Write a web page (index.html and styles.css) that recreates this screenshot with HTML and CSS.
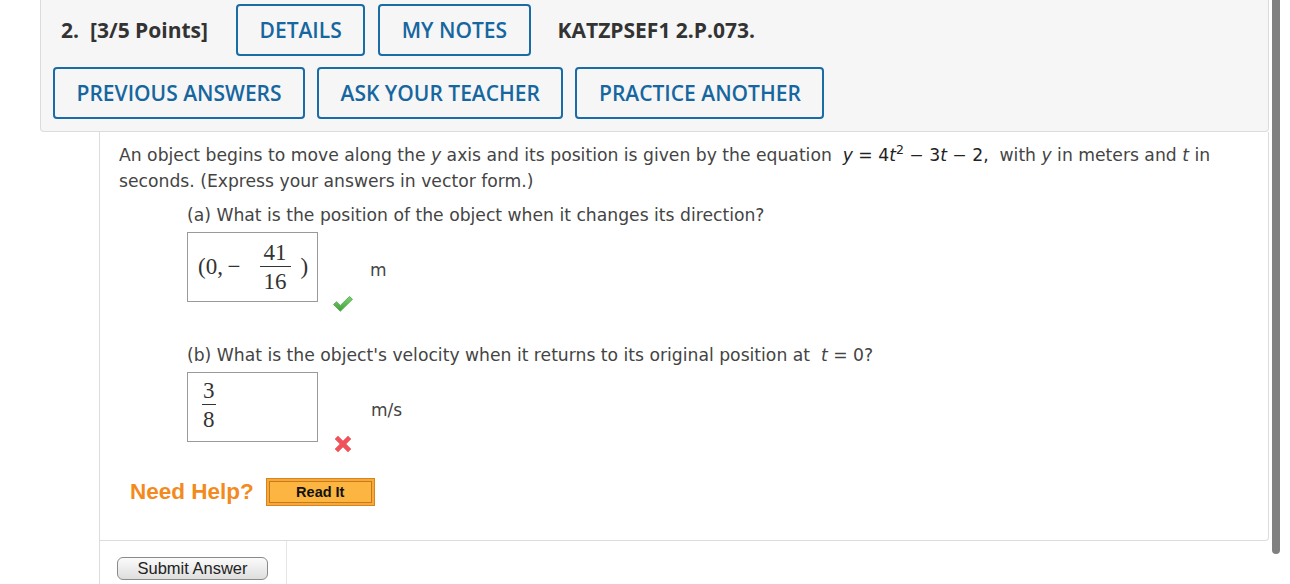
FILE: index.html
```html
<!DOCTYPE html>
<html>
<head>
<meta charset="utf-8">
<link rel="stylesheet" href="styles.css">
</head>
<body>
<div class="page">
  <div class="qhead">
    <div class="row row1">
      <span class="qnum">2.</span>
      <span class="pts">[3/5 Points]</span>
      <button class="hbtn btn-details">DETAILS</button>
      <button class="hbtn">MY NOTES</button>
      <span class="code">KATZPSEF1 2.P.073.</span>
    </div>
    <div class="row row2">
      <button class="hbtn">PREVIOUS ANSWERS</button>
      <button class="hbtn">ASK YOUR TEACHER</button>
      <button class="hbtn">PRACTICE ANOTHER</button>
    </div>
  </div>
  <div class="qbody">
    <div class="qarea">
      <p class="stem">An object begins to move along the <i>y</i> axis and its position is given by the equation&nbsp; <span class="eq"><i>y</i> = 4<i>t</i><sup>2</sup> − 3<i>t</i> − 2,</span>&nbsp; with <i>y</i> in meters and <i>t</i> in seconds. (Express your answers in vector form.)</p>
      <div class="part">
        <p class="prompt">(a) What is the position of the object when it changes its direction?</p>
        <div class="ansrow">
          <div class="ansbox">
            <span class="math">(0,&thinsp;−<span class="frac frac-a"><span class="num">41</span><span class="den">16</span></span>)</span>
          </div>
          <span class="mark">
            <svg width="22" height="18" viewBox="0 0 22 18"><defs><linearGradient id="g1" x1="0" y1="0" x2="0" y2="1"><stop offset="0" stop-color="#7ed36f"/><stop offset="1" stop-color="#3f9e3a"/></linearGradient></defs><path d="M1.5 9.5 L4.5 6.8 L8.3 10.4 L17.5 1.5 L20.5 4.3 L8.3 16.3 Z" fill="url(#g1)" stroke="#4aa845" stroke-width="0.8" stroke-linejoin="round"/></svg>
          </span>
          <span class="unit unit-m">m</span>
        </div>
      </div>
      <div class="part partb">
        <p class="prompt">(b) What is the object's velocity when it returns to its original position at&nbsp; <i>t</i> = 0?</p>
        <div class="ansrow">
          <div class="ansbox">
            <span class="math frac frac-b"><span class="num">3</span><span class="den">8</span></span>
          </div>
          <span class="mark">
            <svg width="20" height="20" viewBox="0 0 20 20"><path d="M2 5 L5 2 L10 7 L15 2 L18 5 L13 10 L18 15 L15 18 L10 13 L5 18 L2 15 L7 10 Z" fill="#f0525a" stroke="#f26b72" stroke-width="0.8" stroke-linejoin="round"/></svg>
          </span>
          <span class="unit">m/s</span>
        </div>
      </div>
      <div class="help">
        <span class="needhelp">Need Help?</span>
        <button class="readit"><span>Read It</span></button>
      </div>
    </div>
    <div class="qfoot">
      <div class="subcell"><button class="submit">Submit Answer</button></div>
      <div class="restcell"></div>
    </div>
  </div>
  <div class="scrollbar"></div>
</div>
</body>
</html>
```
FILE: styles.css
```css
html, body {
  margin: 0;
  padding: 0;
  background: #fff;
}
body {
  width: 1290px;
  height: 584px;
  overflow: hidden;
  font-family: "DejaVu Sans", Verdana, sans-serif;
  color: #444;
}
.page {
  position: relative;
  padding-left: 40px;
  width: 1229px;
}
.qhead {
  background: #f6f6f6;
  border: 1px solid #dcdcdc;
  border-top: none;
  border-radius: 0 0 4px 4px;
  padding: 4px 12px 12px 12px;
  font-family: "Open Sans", sans-serif;
}
.row {
  display: flex;
  align-items: center;
}
.row1 {
  height: 51px;
  padding-left: 8px;
}
.row2 {
  margin-top: 12px;
  gap: 12px;
}
.qnum, .pts, .code {
  font-weight: 700;
  font-size: 21px;
  color: #333;
}
.pts {
  margin-left: 11px;
  margin-right: 28px;
}
.code {
  margin-left: 27px;
}
.hbtn {
  font-family: "Open Sans", sans-serif;
  font-size: 21px;
  font-weight: 600;
  color: #1666a0;
  background: transparent;
  border: 2px solid #1a6ca6;
  border-radius: 4px;
  height: 52px;
  padding: 0 21.5px;
  cursor: pointer;
}
.btn-details {
  margin-right: 13px;
}
.qbody {
  margin-left: 59px;
  border-left: 1px solid #dcdcdc;
}
.qarea {
  border-right: 1px solid #dcdcdc;
  border-bottom: 1px solid #dcdcdc;
  border-bottom-right-radius: 4px;
  padding: 10px 40px 0 19px;
  height: 398px;
  font-size: 17.2px;
}
.stem {
  margin: 0;
  line-height: 26px;
}
.eq {
  color: #222;
}
.eq sup {
  font-size: 12.5px;
  vertical-align: 7px;
  line-height: 0;
}
.part {
  margin-left: 68px;
}
.prompt {
  margin: 8px 0 0 0;
  line-height: 26px;
}
.partb .prompt {
  margin-top: 40px;
}
.ansrow {
  display: flex;
  align-items: center;
  margin-top: 4px;
}
.ansbox {
  width: 129px;
  height: 68px;
  border: 1px solid #9a9a9a;
  display: flex;
  align-items: center;
  box-sizing: content-box;
}
.math {
  font-family: "Liberation Serif", "DejaVu Serif", serif;
  font-size: 23px;
  color: #333;
  display: inline-flex;
  align-items: center;
  margin-left: 10px;
}
.frac {
  display: inline-flex;
  flex-direction: column;
  align-items: center;
}
.frac .num {
  border-bottom: 1px solid #333;
  padding: 0 3px;
  line-height: 27px;
}
.frac .den {
  line-height: 29px;
}
.frac-a {
  margin: 0 10px 0 19px;
}
.frac-a .num {
  padding: 0 4px;
}
.frac-b {
  margin-left: 14px;
  margin-top: -4px;
}
.frac-b .num {
  padding: 0 1px;
}
.mark {
  align-self: flex-end;
  margin: 0 0 -12px 14px;
  width: 22px;
  height: 20px;
  display: flex;
  align-items: center;
  justify-content: center;
}
.unit {
  margin-left: 17px;
  font-size: 17px;
  margin-top: 6px;
}
.unit-m {
  margin-left: 16px;
}
.help {
  display: flex;
  align-items: center;
  margin-top: 36px;
  margin-left: 11px;
}
.needhelp {
  font-family: "Liberation Sans", Arial, sans-serif;
  font-weight: 700;
  font-size: 22.5px;
  color: #f28a1e;
}
.readit {
  margin-left: 12px;
  width: 109px;
  height: 28px;
  padding: 2px;
  background: #f7a93a;
  border: 1px solid #d9831c;
  box-sizing: border-box;
  cursor: pointer;
}
.readit span {
  display: flex;
  align-items: center;
  justify-content: center;
  height: 100%;
  border: 1px solid #c77a1a;
  background: #fbb540;
  box-sizing: border-box;
  font-family: "Liberation Sans", Arial, sans-serif;
  font-weight: 700;
  font-size: 14.5px;
  color: #111;
}
.qfoot {
  display: flex;
  height: 60px;
}
.subcell {
  width: 187px;
  border-right: 1px solid #e6e6e6;
  padding: 16px 0 0 17px;
  box-sizing: border-box;
}
.submit {
  width: 151px;
  height: 23px;
  border: 1px solid #8a8a8a;
  border-radius: 6px;
  background: linear-gradient(#fbfbfb, #dedede);
  font-family: "Liberation Sans", Arial, sans-serif;
  font-size: 16.5px;
  color: #222;
  padding: 0;
}
.restcell {
  flex: 1;
}
.scrollbar {
  position: absolute;
  left: 1272px;
  top: 0;
  width: 8px;
  height: 554px;
  background: #808080;
  border-radius: 0 0 4px 4px;
}
```
